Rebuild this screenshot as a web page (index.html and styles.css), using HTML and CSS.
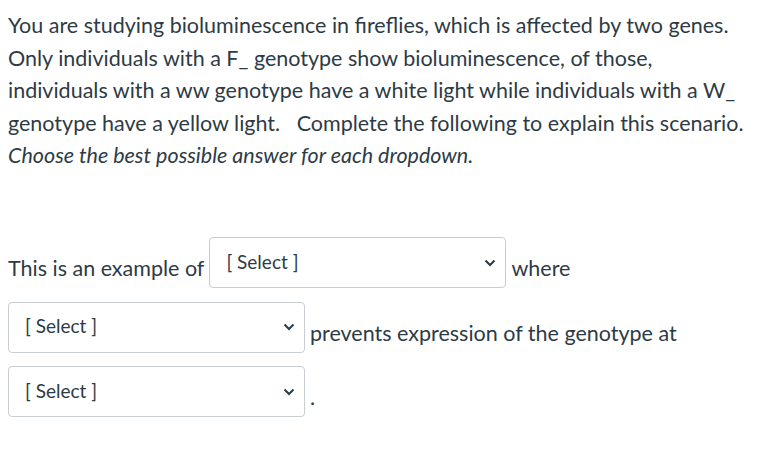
FILE: index.html
```html
<!DOCTYPE html>
<html>
<head>
<meta charset="utf-8">
<link rel="stylesheet" href="styles.css">
</head>
<body>
<div class="question">
  <p class="prompt">You are studying bioluminescence in fireflies, which is affected by two genes. Only individuals with a F_ genotype show bioluminescence, of those, individuals with a ww genotype have a white light while individuals with a W_ genotype have a yellow light.&nbsp;&nbsp; Complete the following to explain this scenario.<br><em>Choose the best possible answer for each dropdown.</em></p>
  <div class="answers">
    <div class="row">
      <span class="txt">This is an example of</span>
      <div class="select"><span>[ Select ]</span><svg class="chev" width="12" height="8" viewBox="0 0 12 8"><path d="M1.5 1.5 L6 6 L10.5 1.5" fill="none" stroke="#2d3b45" stroke-width="2"/></svg></div>
      <span class="txt">where</span>
    </div>
    <div class="row">
      <div class="select"><span>[ Select ]</span><svg class="chev" width="12" height="8" viewBox="0 0 12 8"><path d="M1.5 1.5 L6 6 L10.5 1.5" fill="none" stroke="#2d3b45" stroke-width="2"/></svg></div>
      <span class="txt">prevents expression of the genotype at</span>
    </div>
    <div class="row">
      <div class="select"><span>[ Select ]</span><svg class="chev" width="12" height="8" viewBox="0 0 12 8"><path d="M1.5 1.5 L6 6 L10.5 1.5" fill="none" stroke="#2d3b45" stroke-width="2"/></svg></div>
      <span class="txt">.</span>
    </div>
  </div>
</div>
</body>
</html>
```
FILE: styles.css
```css
html, body {
  margin: 0;
  padding: 0;
  background: #fff;
}
body {
  padding: 9px 8px;
  font-family: Lato, "Noto Sans", sans-serif;
  color: #2d3b45;
  font-size: 21.5px;
  line-height: 32.5px;
}
.prompt {
  margin: 0;
}
.answers {
  margin-top: 65.5px;
  display: flex;
  flex-direction: column;
  gap: 13.5px;
}
.row {
  display: flex;
  align-items: center;
  gap: 5px;
}
.txt {
  padding-top: 12px;
}
.select {
  box-sizing: border-box;
  width: 297px;
  height: 51px;
  border: 1px solid #c7cdd1;
  border-radius: 4px;
  display: flex;
  align-items: center;
  justify-content: space-between;
  padding: 0 9px 0 16px;
  font-size: 19px;
  line-height: 22px;
}
.select span {
  padding-bottom: 2px;
}
.chev {
  display: block;
}
```
